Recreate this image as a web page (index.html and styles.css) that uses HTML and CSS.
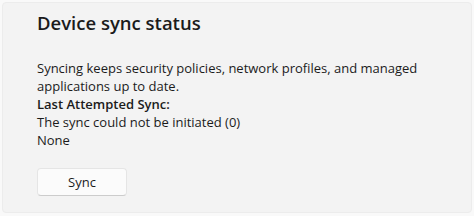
FILE: index.html
```html
<!DOCTYPE html>
<html lang="en">
<head>
  <meta charset="UTF-8">
  <title>Device sync status</title>
  <link rel="stylesheet" href="styles.css">
</head>
<body>

  <div class="panel">
    <h2 class="title">Device sync status</h2>
    <p class="desc">Syncing keeps security policies, network profiles, and managed applications up to date.</p>
    <p class="label">Last Attempted Sync:</p>
    <p class="line">The sync could not be initiated (0)</p>
    <p class="line">None</p>
    <button class="sync-btn">Sync</button>
  </div>

</body>
</html>
```

FILE: styles.css
```css
body { font-family: "Open Sans", sans-serif; background: #f9f9f9; margin: 0; padding: 2px; color: #1b1b1b; }
.panel {
  height: 211px;
  box-sizing: border-box;
  background: #f3f3f3;
  border: 1px solid #ececec;
  border-radius: 4px;
  padding: 8px 34px 0 34px;
}
.title { font-size: 18.5px; font-weight: 600; margin: 0 0 24px 0; line-height: 24px; }
p { margin: 0; font-size: 13px; line-height: 18px; }
.desc { width: 400px; }
.label { font-weight: 600; }
.sync-btn {
  margin-top: 19px;
  width: 90px;
  height: 28px;
  background: #fbfbfb;
  border: 1px solid #e5e5e5;
  border-bottom-color: #cccccc;
  border-radius: 4px;
  font-family: "Open Sans", sans-serif;
  font-size: 13px;
  color: #1b1b1b;
  cursor: pointer;
}
```
